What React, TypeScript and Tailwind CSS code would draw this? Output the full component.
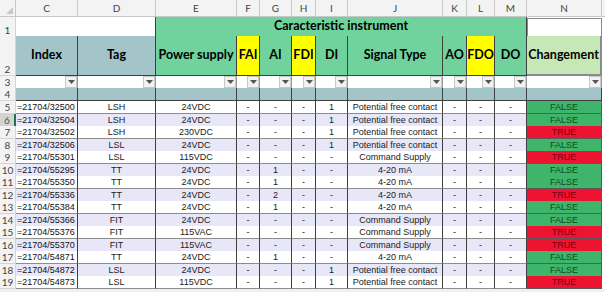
import React from "react";

const COLS =
  "grid grid-cols-[16px_62px_78px_81px_23px_32px_24px_32px_95px_24px_28px_32px_75px_3px]";

type Row = [number, string, string, string, string, string, string, string, string, boolean];

const rows: Row[] = [
  [5, "=21704/32500", "LSH", "24VDC", "-", "-", "-", "1", "Potential free contact", false],
  [6, "=21704/32504", "LSH", "24VDC", "-", "-", "-", "1", "Potential free contact", false],
  [7, "=21704/32502", "LSH", "230VDC", "-", "-", "-", "1", "Potential free contact", true],
  [8, "=21704/32506", "LSL", "24VDC", "-", "-", "-", "1", "Potential free contact", false],
  [9, "=21704/55301", "LSL", "115VDC", "-", "-", "-", "-", "Command Supply", true],
  [10, "=21704/55295", "TT", "24VDC", "-", "1", "-", "-", "4-20 mA", false],
  [11, "=21704/55350", "TT", "24VDC", "-", "1", "-", "-", "4-20 mA", false],
  [12, "=21704/55336", "TT", "24VDC", "-", "2", "-", "-", "4-20 mA", true],
  [13, "=21704/55384", "TT", "24VDC", "-", "1", "-", "-", "4-20 mA", false],
  [14, "=21704/55366", "FIT", "24VDC", "-", "-", "-", "-", "Command Supply", false],
  [15, "=21704/55376", "FIT", "115VAC", "-", "-", "-", "-", "Command Supply", true],
  [16, "=21704/55370", "FIT", "115VAC", "-", "-", "-", "-", "Command Supply", true],
  [17, "=21704/54871", "TT", "24VDC", "-", "1", "-", "-", "4-20 mA", false],
  [18, "=21704/54872", "LSL", "24VDC", "-", "-", "-", "1", "Potential free contact", false],
  [19, "=21704/54873", "LSL", "115VDC", "-", "-", "-", "1", "Potential free contact", true],
];

const letters = ["C", "D", "E", "F", "G", "H", "I", "J", "K", "L", "M", "N"];

const DATA_FONT = { fontFamily: "'Liberation Sans', Arial, sans-serif" };

function RowHead({ n, active }: { n: number | string; active?: boolean }) {
  return (
    <div
      className={
        "flex items-end justify-center border-r border-b border-[#d4d4d4] text-[10px] leading-[12px] " +
        (active
          ? "bg-[#d3d3d3] text-[#217346] border-r-2 border-r-[#217346]"
          : "bg-[#f3f3f3] text-[#444]")
      }
    >
      {n}
    </div>
  );
}

function Drop() {
  return (
    <div className="flex justify-end items-stretch bg-white border-r border-b border-[#9a9a9a]">
      <div className="flex items-center justify-center w-[12px] bg-[#f2f2f2] border border-[#c8c8c8]">
        <svg width="7" height="4" viewBox="0 0 7 4">
          <path d="M0 0 L7 0 L3.5 4 Z" fill="#555" />
        </svg>
      </div>
    </div>
  );
}

export default function App() {
  return (
    <div
      className="w-[605px] h-[292px] bg-white overflow-hidden text-[#1a1a1a]"
      style={{ fontFamily: "Lato, 'Liberation Sans', sans-serif" }}
    >
      {/* Column letters */}
      <div className={COLS + " h-[17px]"}>
        <div className="relative bg-[#f3f3f3] border-r border-b border-[#c8c8c8]">
          <svg className="absolute right-[2px] bottom-[2px]" width="7" height="7" viewBox="0 0 7 7">
            <path d="M7 0 L7 7 L0 7 Z" fill="#c9c9c9" />
          </svg>
        </div>
        {letters.map((l) => (
          <div
            key={l}
            className="flex items-center justify-center bg-[#f3f3f3] border-r border-b border-[#c8c8c8] text-[10px] text-[#444]"
          >
            {l}
          </div>
        ))}
        <div className="bg-[#f3f3f3] border-b border-[#c8c8c8]" />
      </div>

      {/* Row 1 */}
      <div className={COLS + " h-[19px]"}>
        <RowHead n={1} />
        <div className="col-span-2 bg-white border-r border-b border-[#3f3f3f]" />
        <div className="col-span-9 flex items-center justify-center bg-[#70d29c] border-r border-b border-[#3f3f3f] text-[12.5px] font-bold text-black">
          Caracteristic instrument
        </div>
        <div className="bg-white border-r border-b border-[#8a8a8a] border-l border-t border-l-[#8a8a8a] border-t-[#8a8a8a] mt-[1px]" />
        <div />
      </div>

      {/* Row 2 */}
      <div className={COLS + " h-[40px]"}>
        <RowHead n={2} />
        {[
          ["Index", "bg-[#a3c5c9]"],
          ["Tag", "bg-[#a3c5c9]"],
          ["Power supply", "bg-[#70d29c]"],
          ["FAI", "bg-[#ffff00]"],
          ["AI", "bg-[#70d29c]"],
          ["FDI", "bg-[#ffff00]"],
          ["DI", "bg-[#70d29c]"],
          ["Signal Type", "bg-[#70d29c]"],
          ["AO", "bg-[#70d29c]"],
          ["FDO", "bg-[#ffff00]"],
          ["DO", "bg-[#70d29c]"],
        ].map(([t, bg]) => (
          <div
            key={t}
            className={
              "flex items-center justify-center border-r border-b border-[#3f3f3f] text-[12.5px] font-bold text-black whitespace-nowrap " +
              bg
            }
          >
            {t}
          </div>
        ))}
        <div className="flex items-center justify-center bg-[#c6e8b6] border-r-2 border-b-2 border-[#8a8a8a] text-[12.5px] font-bold text-black">
          Changement
        </div>
        <div />
      </div>

      {/* Row 3 (filters) */}
      <div className={COLS + " h-[12px]"}>
        <RowHead n={3} />
        {letters.map((l) => (
          <Drop key={l} />
        ))}
        <div />
      </div>

      {/* Row 4 */}
      <div className={COLS + " h-[13px]"}>
        <RowHead n={4} />
        {letters.map((l) => (
          <div key={l} className="bg-[#a3c5c9] border-r border-b border-[#3f3f3f]" />
        ))}
        <div />
      </div>

      {/* Data rows */}
      {rows.map((r, i) => {
        const [n, idx, tag, ps, fai, ai, fdi, di, sig, chg] = r;
        const bg = i % 2 === 0 ? "bg-white" : "bg-[#e7e7f8]";
        const h = i % 2 === 0 ? "h-[13px]" : "h-[12px]";
        const cell =
          "flex items-center justify-center border-r border-b border-r-[#3f3f3f] border-b-[#8c8c8c] text-[9px] leading-none whitespace-nowrap text-[#222] " +
          bg;
        return (
          <div key={n} className={COLS + " " + h}>
            <RowHead n={n} active={n === 6} />
            <div
              style={DATA_FONT}
              className={
                "flex items-center pl-[1px] border-r border-b border-r-[#3f3f3f] border-b-[#8c8c8c] text-[9px] leading-none whitespace-nowrap text-[#111] overflow-hidden " +
                bg
              }
            >
              {idx}
            </div>
            <div style={DATA_FONT} className={cell}>{tag}</div>
            <div style={DATA_FONT} className={cell}>{ps}</div>
            <div style={DATA_FONT} className={cell}>{fai}</div>
            <div style={DATA_FONT} className={cell}>{ai}</div>
            <div style={DATA_FONT} className={cell}>{fdi}</div>
            <div style={DATA_FONT} className={cell}>{di}</div>
            <div style={DATA_FONT} className={cell}>{sig}</div>
            <div style={DATA_FONT} className={cell}>-</div>
            <div style={DATA_FONT} className={cell}>-</div>
            <div style={DATA_FONT} className={cell}>-</div>
            <div
              style={DATA_FONT}
              className={
                "flex items-center justify-center border-r border-b border-[#5a5a5a] text-[9px] leading-none " +
                (chg ? "bg-[#ee1330] text-[#7a0010]" : "bg-[#3fb56b] text-[#0d4d1c]")
              }
            >
              {chg ? "TRUE" : "FALSE"}
            </div>
            <div />
          </div>
        );
      })}
      <div className="h-[3px] bg-[#f0f0f0]" />
    </div>
  );
}
